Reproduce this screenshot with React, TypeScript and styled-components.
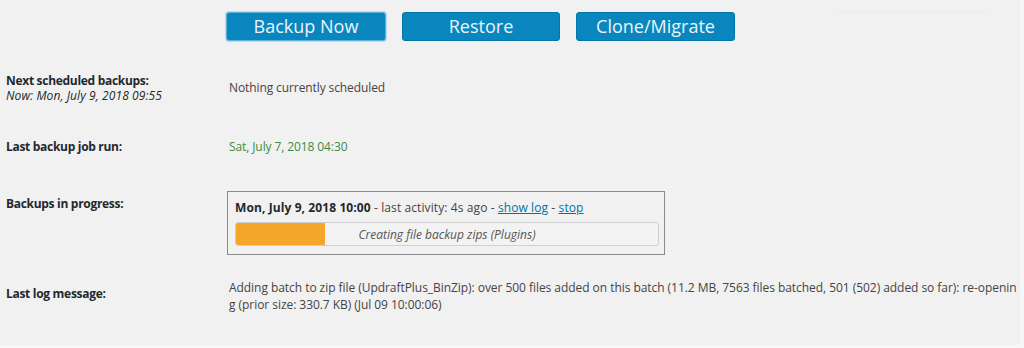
import styled, { createGlobalStyle } from 'styled-components';

const GlobalStyle = createGlobalStyle`
    html, body {
        margin: 0;
        padding: 0;
        background: #f1f1f1;
    }
    body {
        font-family: 'Open Sans', 'Noto Sans', sans-serif;
        font-size: 12px;
        color: #444;
    }
`;

const Page = styled.div`
    position: relative;
    width: 1024px;
    height: 348px;
    box-sizing: border-box;
    padding-top: 12px;
    border-right: 4px solid #f7f7f7;
    border-bottom: 3px solid #f7f7f7;
    overflow: hidden;
`;

const Faded = styled.div`
    position: absolute;
    top: 0;
    left: 834px;
    width: 154px;
    height: 11px;
    background: #f2f2f2;
    border-bottom: 1px solid #ededed;
`;

const ButtonBar = styled.div`
    display: flex;
    gap: 16px;
    padding-left: 226px;
`;

const Button = styled.button<{ $focused?: boolean; $width: number }>`
    width: ${(p) => p.$width}px;
    height: 29px;
    padding: 0 0 2px;
    border-radius: 3px;
    border: 1px solid ${(p) => (p.$focused ? '#5db3dc' : '#0077a8')};
    box-shadow: ${(p) => (p.$focused ? '0 0 0 1px #b9dcee' : 'none')};
    background: #0a86bf;
    color: #eaf4fa;
    font-family: 'Open Sans', 'Noto Sans', sans-serif;
    font-size: 18px;
    line-height: 26px;
`;

const Table = styled.div`
    display: flex;
    flex-direction: column;
`;

const Row = styled.div<{ $top: number; $height: number; $align?: string }>`
    display: grid;
    grid-template-columns: 223px 1fr;
    align-items: ${(p) => p.$align || 'center'};
    margin-top: ${(p) => p.$top}px;
    height: ${(p) => p.$height}px;
    padding-left: 6px;
`;

const Label = styled.div<{ $shift?: number }>`
    font-weight: 700;
    color: #23282d;
    line-height: 15px;
    letter-spacing: -0.3px;
    transform: translateY(${(p) => p.$shift || 0}px);
`;

const Sub = styled.div`
    font-weight: 400;
    font-style: italic;
    letter-spacing: 0.1px;
`;

const Value = styled.div<{ $green?: boolean }>`
    line-height: 15px;
    letter-spacing: -0.1px;
    color: ${(p) => (p.$green ? '#3f8a3f' : '#444')};
`;

const LogText = styled.div`
    width: 790px;
    line-height: 17px;
    letter-spacing: -0.05px;
    word-break: break-all;
`;

const JobBox = styled.div`
    width: 438px;
    height: 64px;
    box-sizing: border-box;
    margin-left: -2px;
    border: 1px solid #8a8a8a;
    padding: 8px 5px 0 7px;
`;

const JobLine = styled.div`
    line-height: 15px;
    letter-spacing: 0.1px;
    b {
        color: #23282d;
    }
    a {
        color: #0073aa;
    }
`;

const Progress = styled.div`
    position: relative;
    margin-top: 7px;
    height: 24px;
    box-sizing: border-box;
    border: 1px solid #cfcfcf;
    border-radius: 3px;
    background: #f3f3f3;
    overflow: hidden;
    display: flex;
    align-items: center;
    justify-content: center;
`;

const Fill = styled.div`
    position: absolute;
    left: 0;
    top: 0;
    bottom: 0;
    background: #f4a62a;
`;

const ProgressText = styled.span`
    position: relative;
    font-style: italic;
    color: #555;
`;

export default function App() {
    const percent = 21;
    return (
        <Page>
            <GlobalStyle />
            <Faded />
            <ButtonBar>
                <Button $focused $width={160}>Backup Now</Button>
                <Button $width={158}>Restore</Button>
                <Button $width={159}>Clone/Migrate</Button>
            </ButtonBar>
            <Table>
                <Row $top={31} $height={31}>
                    <Label>
                        Next scheduled backups:
                        <Sub>Now: Mon, July 9, 2018 09:55</Sub>
                    </Label>
                    <Value>Nothing currently scheduled</Value>
                </Row>
                <Row $top={36} $height={15}>
                    <Label>Last backup job run:</Label>
                    <Value $green>Sat, July 7, 2018 04:30</Value>
                </Row>
                <Row $top={37} $height={64} $align="start">
                    <Label $shift={5}>Backups in progress:</Label>
                    <JobBox>
                        <JobLine>
                            <b>Mon, July 9, 2018 10:00</b> - last activity: 4s ago - <a href="#">show log</a> - <a href="#">stop</a>
                        </JobLine>
                        <Progress>
                            <Fill style={{ width: `${percent}%` }} />
                            <ProgressText>Creating file backup zips (Plugins)</ProgressText>
                        </Progress>
                    </JobBox>
                </Row>
                <Row $top={23} $height={35}>
                    <Label $shift={-2}>Last log message:</Label>
                    <LogText>
                        Adding batch to zip file (UpdraftPlus_BinZip): over 500 files added on this batch (11.2 MB, 7563 files batched, 501 (502) added so far): re-opening (prior size: 330.7 KB) (Jul 09 10:00:06)
                    </LogText>
                </Row>
            </Table>
        </Page>
    );
}
